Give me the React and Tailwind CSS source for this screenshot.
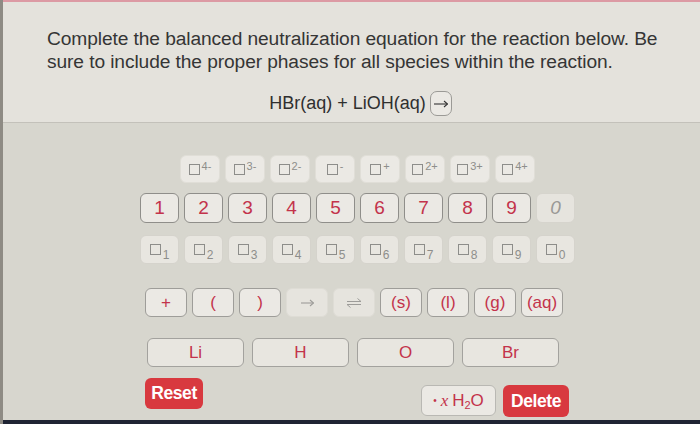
import React from 'react';

const red = 'text-[#c3334b]';

function Box() {
  return <span className="inline-block w-[11px] h-[11px] border border-[#8d8d8a]" />;
}

function Arrow({ w = 14, color = '#333' }) {
  return (
    <svg width={w} height="8" viewBox={`0 0 ${w} 8`} fill="none" stroke={color} strokeWidth="1.1">
      <path d={`M0 4 H${w - 0.5}`} />
      <path d={`M${w - 4} 1 L${w - 0.5} 4 L${w - 4} 7`} />
    </svg>
  );
}

function Equil({ color = '#9d9c99' }) {
  return (
    <svg width="16" height="10" viewBox="0 0 16 10" fill="none" stroke={color} strokeWidth="1">
      <path d="M1 3.5 H15 M11.5 0.5 L15 3.5" />
      <path d="M15 6.5 H1 M4.5 9.5 L1 6.5" />
    </svg>
  );
}

export default function App() {
  const charges = ['4-', '3-', '2-', '-', '+', '2+', '3+', '4+'];
  const digits = ['1', '2', '3', '4', '5', '6', '7', '8', '9'];
  const subs = ['1', '2', '3', '4', '5', '6', '7', '8', '9', '0'];
  const symbols = [
    { k: 'plus', t: '+', on: true },
    { k: 'lp', t: '(', on: true },
    { k: 'rp', t: ')', on: true },
    { k: 'arrow', t: <Arrow w={13} color="#9d9c99" />, on: false },
    { k: 'eq', t: <Equil />, on: false },
    { k: 's', t: '(s)', on: true },
    { k: 'l', t: '(l)', on: true },
    { k: 'g', t: '(g)', on: true },
    { k: 'aq', t: '(aq)', on: true },
  ];
  const elements = ['Li', 'H', 'O', 'Br'];

  return (
    <div
      className="w-[700px] h-[424px] flex flex-col bg-[#d7d6ce] border-l-[3px] border-[#8e8b84] overflow-hidden"
      style={{ fontFamily: '"Liberation Sans", Arial, sans-serif' }}
    >
      <div className="h-[2px] bg-[#dc9aa4]" />

      {/* question */}
      <div className="h-[121px] bg-[#e4e2dc] border-b border-[#c3c1ba] pl-[44px] pr-[20px] pt-[25px]">
        <p className="text-[19.2px] leading-[23px] text-[#353535] tracking-[-0.1px]">
          Complete the balanced neutralization equation for the reaction below. Be sure to include the proper phases for all species within the reaction.
        </p>
        <div className="flex justify-center items-center mt-[17px] pr-[6px]">
          <span className="text-[18px] text-[#2f2f2f]">HBr(aq) + LiOH(aq)</span>
          <span className="ml-[4px] w-[22px] h-[25px] rounded-[7px] border border-[#9b9a96] bg-[#ebe9e4] flex items-center justify-center">
            <Arrow w={14} color="#333" />
          </span>
        </div>
      </div>

      {/* keypad */}
      <div className="flex-1 pl-[137px] pt-[32px]">
        <div className="w-[437px] flex flex-col">
          <div className="flex gap-[5px] pl-[40px]">
            {charges.map((c) => (
              <div
                key={c}
                className="w-[40px] h-[28px] rounded-[6px] bg-[#ebe9e4] border border-[#e0ded7] flex items-start justify-center pt-[8px] text-[#8e8e8b]"
              >
                <Box />
                <span className="text-[11px] leading-[11px] ml-[2px] -mt-[3px]">{c}</span>
              </div>
            ))}
          </div>

          <div className="flex gap-[5px] mt-[10px]">
            {digits.map((d) => (
              <div
                key={d}
                className={`w-[39px] h-[30px] rounded-[6px] bg-[#ebe9e4] border border-[#8f8e8a] flex items-center justify-center text-[19px] ${red}`}
              >
                {d}
              </div>
            ))}
            <div className="w-[39px] h-[30px] rounded-[6px] bg-[#e6e4de] border border-[#d6d4cd] flex items-center justify-center text-[19px] italic text-[#9a9996]">
              0
            </div>
          </div>

          <div className="flex gap-[5px] mt-[12px]">
            {subs.map((s) => (
              <div
                key={s}
                className="w-[39px] h-[29px] rounded-[6px] bg-[#e8e6e0] border border-[#d5d3cc] flex items-center justify-center text-[#8e8e8b]"
              >
                <Box />
                <span className="text-[12px] leading-[12px] ml-[2px] mt-[10px]">{s}</span>
              </div>
            ))}
          </div>

          <div className="flex gap-[5px] mt-[24px] pl-[5px]">
            {symbols.map((s) => (
              <div
                key={s.k}
                className={`w-[42px] h-[29px] rounded-[6px] flex items-center justify-center ${
                  s.on
                    ? `bg-[#ebe9e4] border border-[#9e9d99] text-[17px] ${red}`
                    : 'bg-[#e6e4de] border border-[#dedcd5]'
                }`}
              >
                {s.t}
              </div>
            ))}
          </div>

          <div className="flex gap-[8px] mt-[21px] pl-[7px]">
            {elements.map((e) => (
              <div
                key={e}
                className={`w-[97px] h-[29px] rounded-[6px] bg-[#e8e6e0] border border-[#a3a29e] flex items-center justify-center text-[17px] ${red}`}
              >
                {e}
              </div>
            ))}
          </div>

          <div className="flex items-start mt-[11px] pl-[5px]">
            <div className="w-[58px] h-[31px] rounded-[6px] bg-[#d8393f] flex items-center justify-center text-[17.5px] font-semibold text-white tracking-[-0.4px]">
              Reset
            </div>
            <div className="flex-1" />
            <div className="mt-[7px] flex gap-[7px]">
              <div className="w-[75px] h-[31px] rounded-[6px] bg-[#ebe9e4] border border-[#b9b8b3] flex items-center justify-center text-[17px] text-[#c3334b]">
                <span className="text-[10px] mr-[4px]">•</span>
                <span className="italic mr-[4px]" style={{ fontFamily: '"Liberation Serif", serif' }}>x</span>
                <span>
                  H<sub className="text-[11px]">2</sub>O
                </span>
              </div>
              <div className="w-[66px] h-[32px] rounded-[6px] bg-[#d8393f] flex items-center justify-center text-[17.5px] font-semibold text-white tracking-[-0.4px] mr-[8px]">
                Delete
              </div>
            </div>
          </div>
        </div>
      </div>

      <div className="h-[4px] bg-[#1f2433]" />
    </div>
  );
}
